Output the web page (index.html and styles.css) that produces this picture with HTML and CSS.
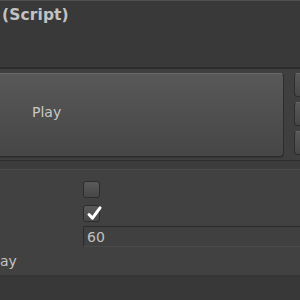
FILE: index.html
```html
<!DOCTYPE html>
<html>
<head>
<meta charset="utf-8">
<link rel="stylesheet" href="styles.css">
</head>
<body>
<div class="screen">
  <div class="header"><span class="title">(Script)</span></div>
  <div class="toolbar">
    <div class="big-btn"><span class="btn-label">Play</span></div>
    <div class="side-btns">
      <div class="small-btn"></div>
      <div class="small-btn"></div>
      <div class="small-btn"></div>
    </div>
  </div>
  <div class="divider"></div>
  <div class="props">
    <div class="row"><span class="label"></span><span class="checkbox"></span></div>
    <div class="row"><span class="label"></span><span class="checkbox checked"><svg class="check" viewBox="0 0 16 16" width="16" height="16"><path d="M4 8.5 L7.5 12.2 L15 1.8" fill="none" stroke="#fff" stroke-width="3" stroke-linecap="round" stroke-linejoin="round"/></svg></span></div>
    <div class="row field-row"><span class="label"></span><span class="field">60</span></div>
    <div class="row text-row"><span class="label">ay</span></div>
  </div>
  <div class="footer"></div>
</div>
</body>
</html>
```
FILE: styles.css
```css
* { box-sizing: border-box; }
html, body { margin: 0; padding: 0; }
body {
  width: 300px;
  height: 300px;
  overflow: hidden;
  background: #383838;
  font-family: "DejaVu Sans", sans-serif;
  color: #c4c4c4;
}
.screen { display: flex; flex-direction: column; width: 300px; height: 300px; }
.header {
  height: 67px;
  flex-shrink: 0;
  border-top: 1px solid #505050;
  background: #393939;
  padding: 4px 0 0 2px;
}
.title {
  font-weight: bold;
  font-size: 15.5px;
  color: #c2c2c2;
  letter-spacing: 0.1px;
}
.toolbar {
  flex-shrink: 0;
  border-top: 2px solid #2c2c2c;
  background: #3f3f3f;
  display: flex;
  align-items: flex-start;
  padding: 4px 0 3px 0;
  height: 93px;
}
.big-btn {
  flex-shrink: 0;
  width: 284px;
  height: 84px;
  background: linear-gradient(#585858, #464646);
  border: 1px solid #2d2d2d;
  border-left: none;
  border-top-color: #6a6a6a;
  border-radius: 0 4px 4px 0;
  box-shadow: 0 1px 0 #333;
  display: flex;
  align-items: center;
  padding: 0 0 6px 32px;
}
.btn-label { font-size: 14px; color: #c8c8c8; }
.side-btns {
  flex-shrink: 0;
  margin-left: 10px;
  display: flex;
  flex-direction: column;
  gap: 5px;
}
.small-btn {
  width: 12px;
  height: 24px;
  background: linear-gradient(#575757, #474747);
  border: 1px solid #2d2d2d;
  border-top-color: #666;
  border-right: none;
  border-radius: 4px 0 0 4px;
}
.divider {
  flex-shrink: 0;
  height: 10px;
  background: #3c3c3c;
  border-top: 1px solid #2f2f2f;
  border-bottom: 1px solid #4a4a4a;
}
.props {
  flex-shrink: 0;
  background: #414141;
  padding-top: 7px;
  border-bottom: 2px solid #353535;
}
.row {
  display: flex;
  align-items: center;
  height: 24px;
}
.label { width: 83px; font-size: 14px; flex-shrink: 0; }
.checkbox {
  width: 17px;
  height: 17px;
  border-radius: 3px;
  background: linear-gradient(#5a5a5a, #474747);
  border: 1px solid #2c2c2c;
  display: flex;
}
.check { overflow: visible; margin: 0 0 0 1px; }
.field-row { height: 22px; }
.field {
  flex: 1;
  height: 21px;
  background: #404040;
  border-top: 1px solid #2b2b2b;
  border-left: 1px solid #2b2b2b;
  border-bottom: 1px solid #4b4b4b;
  font-size: 14px;
  padding: 2px 0 0 3px;
  color: #c0c0c0;
}
.text-row { height: 28px; }
.footer { flex: 1; background: #383838; }
```
